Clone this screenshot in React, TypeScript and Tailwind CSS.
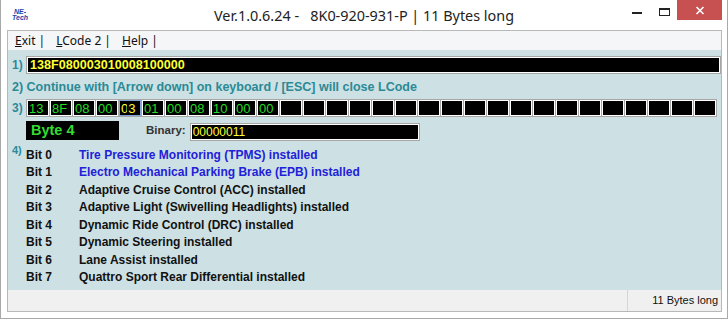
import React from "react";

const bytes = ["13", "8F", "08", "00", "03", "01", "00", "08", "10", "00", "00"];
const bits: { t: string; blue?: boolean }[] = [
  { t: "Tire Pressure Monitoring (TPMS) installed", blue: true },
  { t: "Electro Mechanical Parking Brake (EPB) installed", blue: true },
  { t: "Adaptive Cruise Control (ACC) installed" },
  { t: "Adaptive Light (Swivelling Headlights) installed" },
  { t: "Dynamic Ride Control (DRC) installed" },
  { t: "Dynamic Steering installed" },
  { t: "Lane Assist installed" },
  { t: "Quattro Sport Rear Differential installed" },
];

export default function App() {
  const boxes = Array.from({ length: 30 }, (_, i) => bytes[i]);
  return (
    <div className="relative w-[728px] h-[319px] bg-white border-x border-b border-[#a8a8a8] flex flex-col font-['Liberation_Sans',Arial,sans-serif] overflow-hidden">
      {/* Title bar */}
      <div className="relative h-[30px] flex items-center justify-center">
        <div className="absolute left-[11px] top-[9px] flex flex-col leading-[6px] text-[7px] font-bold italic text-[#1c3fa8] font-['Liberation_Sans',Arial,sans-serif]">
          <span className="pl-[2px]">NE-</span>
          <span>Tech</span>
        </div>
        <span className="text-[14.4px] text-[#222] font-['Noto_Sans','Open_Sans',sans-serif] whitespace-pre mt-[1px]">
          {"Ver.1.0.6.24 -   8K0-920-931-P | 11 Bytes long"}
        </span>
        <div className="absolute left-[631px] top-[12px] w-[10px] h-[2px] bg-[#222]" />
        <div className="absolute left-[658px] top-[8px] w-[11px] h-[8px] border border-t-2 border-[#222]" />
        <div className="absolute left-[676px] top-0 w-[45px] h-[20px] bg-[#c75050] flex items-center justify-center">
          <svg width="10" height="9" viewBox="0 0 10 9">
            <path d="M1.5 1 L8.5 8 M8.5 1 L1.5 8" stroke="white" strokeWidth="1.6" />
          </svg>
        </div>
      </div>
      {/* Inner panel */}
      <div className="ml-[6px] mr-[5px] h-[282px] border border-[#b8b8b8] flex flex-col">
        {/* Menu */}
        <div className="h-[19px] bg-[#f5f6f7] flex items-center pl-[7px] text-[12px] text-[#111] font-['Noto_Sans','Open_Sans',sans-serif] whitespace-pre">
          <span><u>E</u>xit |</span>
          <span className="ml-[11px]"><u>L</u>Code 2 |</span>
          <span className="ml-[11px]"><u>H</u>elp |</span>
        </div>
        {/* Client */}
        <div className="h-[240px] bg-[#cde0e3] flex flex-col pl-[4px]">
          {/* Row 1 */}
          <div className="mt-[6px] h-[18px] flex items-center">
            <span className="w-[14px] text-[12px] font-bold text-[#2b8a9b]">1)</span>
            <div className="flex-1 h-[18px] border border-[#a6a6a6]">
              <div className="h-full border border-white bg-black flex items-center pl-[2px] text-[12.6px] font-bold text-[#ffff33] leading-none">
                138F080003010008100000
              </div>
            </div>
          </div>
          {/* Row 2 */}
          <div className="mt-[6px] h-[14px] flex items-center text-[12.5px] font-bold text-[#2b8a96] whitespace-pre">
            2) Continue with [Arrow down] on keyboard / [ESC] will close LCode
          </div>
          {/* Row 3 */}
          <div className="mt-[5px] h-[18px] flex items-center">
            <span className="w-[14px] text-[12px] font-bold text-[#2b8a9b]">3)</span>
            <div className="flex bg-[#a6a6a6] p-px gap-px">
              {boxes.map((b, i) => (
                <div
                  key={i}
                  className={
                    i === 4
                      ? "w-[22px] h-[16px] border border-[#7fa6d6] bg-black flex items-center pl-px text-[13px] text-[#ffff33] leading-none"
                      : "w-[22px] h-[16px] border border-white bg-black flex items-center pl-px text-[13px] text-[#22dd22] leading-none"
                  }
                >
                  {i === 4 ? (
                    <>
                      <span>0</span>
                      <span className="w-px h-[13px] bg-[#000] -ml-px" />
                      <span>3</span>
                    </>
                  ) : (
                    b
                  )}
                </div>
              ))}
            </div>
          </div>
          {/* Byte / Binary */}
          <div className="mt-[4px] h-[19px] flex items-start pl-[14px]">
            <div className="w-[93px] h-[19px] bg-black flex items-center pl-[5px] text-[14.5px] font-bold text-[#33dd33] leading-none">
              Byte 4
            </div>
            <span className="ml-[27px] mt-[4px] text-[11.5px] font-bold text-[#333] leading-none">Binary:</span>
            <div className="ml-[4px] mt-[2px] w-[230px] h-[18px] border border-[#a6a6a6]">
              <div className="h-full border border-white bg-black flex items-center pl-px text-[12px] text-[#ffff33] leading-none">
                00000011
              </div>
            </div>
          </div>
          {/* Bits */}
          <div className="flex mt-[6px]">
            <span className="w-[14px] text-[11px] font-bold text-[#2b8a9b] leading-none -mt-[1px]">4)</span>
            <div className="flex flex-col">
              {bits.map((b, i) => (
                <div key={i} className="h-[17.5px] flex items-center text-[12px] font-bold leading-none">
                  <span className="w-[53px] text-[#111]">Bit {i}</span>
                  <span className={b.blue ? "text-[#2121d8]" : "text-[#111]"}>{b.t}</span>
                </div>
              ))}
            </div>
          </div>
        </div>
        {/* Status bar */}
        <div className="flex-1 bg-[#f0f0f0] flex">
          <div className="w-[620px] border-r border-[#d6d6d6]" />
          <div className="flex-1 flex items-center justify-end pr-[3px] text-[11px] text-[#111]">11 Bytes long</div>
        </div>
      </div>
    </div>
  );
}
